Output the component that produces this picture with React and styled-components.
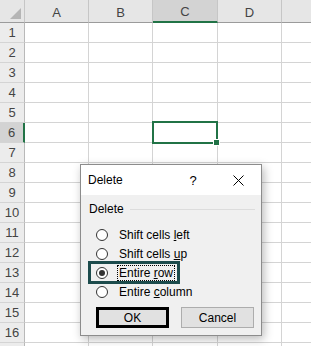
import styled, { createGlobalStyle } from "styled-components";

const GlobalStyle = createGlobalStyle`
  html, body {
    margin: 0;
    padding: 0;
    background: #fff;
    overflow: hidden;
  }
  body {
    font-family: "Liberation Sans", Arial, sans-serif;
  }
`;

const columns = ["A", "B", "C", "D", ""];
const colWidths = [64, 64, 65, 64, 60];
const rows = Array.from({ length: 17 }, (_, i) => i + 1);

const Page = styled.div`
  position: relative;
  width: 311px;
  height: 346px;
  overflow: hidden;
`;

const Sheet = styled.div`
  display: grid;
  grid-template-columns: 25px ${colWidths.map((w) => `${w}px`).join(" ")};
  grid-template-rows: 23px;
  grid-auto-rows: 20px;
`;

const Corner = styled.div`
  background: #e6e6e6;
  border-right: 1px solid #c6c6c6;
  border-bottom: 1px solid #9b9b9b;
  box-sizing: border-box;
  position: relative;

  &::after {
    content: "";
    position: absolute;
    right: 3px;
    bottom: 3px;
    width: 0;
    height: 0;
    border-left: 11px solid transparent;
    border-bottom: 11px solid #b5b5b5;
  }
`;

const ColHead = styled.div`
  box-sizing: border-box;
  background: ${(p) => (p.$active ? "#d3d3d3" : "#e6e6e6")};
  border-right: 1px solid #c6c6c6;
  border-bottom: ${(p) => (p.$active ? "2px solid #217346" : "1px solid #9b9b9b")};
  display: flex;
  align-items: center;
  justify-content: center;
  padding-top: 2px;
  font-size: 13px;
  color: #444;
`;

const RowHead = styled.div`
  box-sizing: border-box;
  background: ${(p) => (p.$active ? "#d3d3d3" : "#ececec")};
  border-right: ${(p) => (p.$active ? "2px solid #217346" : "1px solid #b9b9b9")};
  border-bottom: 1px solid #d4d4d4;
  display: flex;
  align-items: center;
  justify-content: center;
  font-size: 13px;
  color: #444;
`;

const Cell = styled.div`
  box-sizing: border-box;
  border-right: 1px solid #d4d4d4;
  border-bottom: 1px solid #d4d4d4;
  position: relative;
`;

const Selection = styled.div`
  position: absolute;
  left: -1px;
  top: -2px;
  right: -1px;
  bottom: -2px;
  border: 2px solid #217346;
  z-index: 2;

  &::after {
    content: "";
    position: absolute;
    right: -4px;
    bottom: -4px;
    width: 5px;
    height: 5px;
    background: #217346;
    border: 1px solid #fff;
  }
`;

const Dialog = styled.div`
  position: absolute;
  left: 80px;
  top: 164px;
  width: 182px;
  height: 172px;
  box-sizing: border-box;
  background: #f0f0f0;
  border: 1px solid #8c8c8c;
  box-shadow: 2px 3px 9px rgba(0, 0, 0, 0.28);
  font-size: 12px;
  color: #000;
  z-index: 5;
  display: flex;
  flex-direction: column;
`;

const TitleBar = styled.div`
  height: 30px;
  background: #fff;
  display: flex;
  align-items: center;
  padding: 0 0 0 7px;
`;

const Title = styled.div`
  flex: 1;
  font-size: 12px;
`;

const Help = styled.div`
  width: 46px;
  text-align: center;
  font-size: 13px;
`;

const Close = styled.div`
  width: 45px;
  display: flex;
  align-items: center;
  justify-content: center;
`;

const Body = styled.div`
  padding: 6px 0 0 8px;
  display: flex;
  flex-direction: column;
`;

const GroupLabel = styled.div`
  display: flex;
  align-items: center;
  gap: 6px;
  padding-right: 6px;
  height: 16px;

  &::after {
    content: "";
    flex: 1;
    height: 1px;
    background: #dcdcdc;
  }
`;

const Options = styled.div`
  display: flex;
  flex-direction: column;
  margin-top: 8px;
  margin-left: 1px;
`;

const Option = styled.label`
  display: flex;
  align-items: center;
  gap: 9px;
  height: 19px;
  padding: 0 3px 0 6px;
  width: fit-content;
  outline: ${(p) => (p.$focused ? "3px solid #1c4b4c" : "none")};
  outline-offset: -1px;
`;

const Radio = styled.span`
  width: 12px;
  height: 12px;
  box-sizing: border-box;
  border-radius: 50%;
  border: 1px solid #333;
  background: #fff;
  display: flex;
  align-items: center;
  justify-content: center;
  flex: none;

  &::after {
    content: "";
    width: 6px;
    height: 6px;
    border-radius: 50%;
    background: #333;
    display: ${(p) => (p.$checked ? "block" : "none")};
  }
`;

const OptionText = styled.span`
  padding: 0 1px;
  border: 1px dotted ${(p) => (p.$focused ? "#000" : "transparent")};
  line-height: 14px;
`;

const Buttons = styled.div`
  display: flex;
  gap: 12px;
  margin-top: 6px;
  padding-left: 7px;
`;

const Button = styled.div`
  width: 73px;
  height: 21px;
  box-sizing: border-box;
  background: #e1e1e1;
  border: ${(p) => (p.$default ? "3px solid #000" : "1px solid #adadad")};
  display: flex;
  align-items: center;
  justify-content: center;
  font-size: 12px;
`;

const options = [
  { pre: "Shift cells ", key: "l", post: "eft" },
  { pre: "Shift cells ", key: "u", post: "p" },
  { pre: "Entire ", key: "r", post: "ow", checked: true },
  { pre: "Entire ", key: "c", post: "olumn" },
];

export default function App() {
  return (
    <Page>
      <GlobalStyle />
      <Sheet>
        <Corner />
        {columns.map((c, i) => (
          <ColHead key={i} $active={c === "C"}>
            {c}
          </ColHead>
        ))}
        {rows.map((r) => [
          <RowHead key={`h${r}`} $active={r === 6}>
            {r < 17 ? r : ""}
          </RowHead>,
          ...columns.map((c, i) => (
            <Cell key={`${r}-${i}`}>
              {r === 6 && c === "C" && <Selection />}
            </Cell>
          )),
        ])}
      </Sheet>

      <Dialog>
        <TitleBar>
          <Title>Delete</Title>
          <Help>?</Help>
          <Close>
            <svg width="11" height="11" viewBox="0 0 11 11">
              <path d="M0.5 0.5 L10.5 10.5 M10.5 0.5 L0.5 10.5" stroke="#000" strokeWidth="1" />
            </svg>
          </Close>
        </TitleBar>
        <Body>
          <GroupLabel>Delete</GroupLabel>
          <Options>
            {options.map((o, i) => (
              <Option key={i} $focused={o.checked}>
                <Radio $checked={o.checked} />
                <OptionText $focused={o.checked}>
                  {o.pre}
                  <u>{o.key}</u>
                  {o.post}
                </OptionText>
              </Option>
            ))}
          </Options>
          <Buttons>
            <Button $default>OK</Button>
            <Button>Cancel</Button>
          </Buttons>
        </Body>
      </Dialog>
    </Page>
  );
}
